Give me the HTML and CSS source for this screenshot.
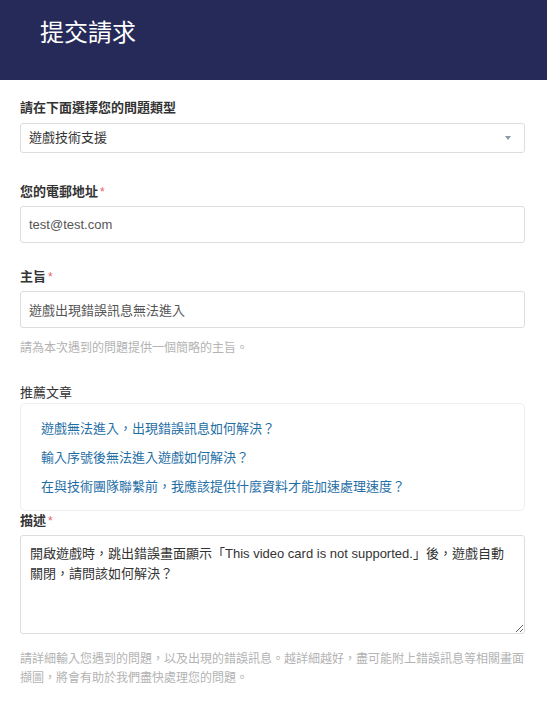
FILE: index.html
```html
<!DOCTYPE html>
<html lang="zh-Hant">
<head>
<meta charset="utf-8">
<title>提交請求</title>
<link rel="stylesheet" href="styles.css">
</head>
<body>
<header class="hero">
  <h1 class="hero-title">提交請求</h1>
</header>
<main class="form">
  <div class="field field-type">
    <label class="label">請在下面選擇您的問題類型</label>
    <div class="select">
      <span class="select-value">遊戲技術支援</span>
      <span class="select-arrow"></span>
    </div>
  </div>

  <div class="field field-email">
    <label class="label">您的電郵地址<span class="req">*</span></label>
    <input class="input" type="text" value="test@test.com">
  </div>

  <div class="field field-subject">
    <label class="label">主旨<span class="req">*</span></label>
    <input class="input" type="text" value="遊戲出現錯誤訊息無法進入">
    <p class="hint hint-subject">請為本次遇到的問題提供一個簡略的主旨。</p>
  </div>

  <div class="field field-articles">
    <div class="label-plain">推薦文章</div>
    <ul class="articles">
      <li><a class="article-link" href="#">遊戲無法進入，出現錯誤訊息如何解決？</a></li>
      <li><a class="article-link" href="#">輸入序號後無法進入遊戲如何解決？</a></li>
      <li><a class="article-link" href="#">在與技術團隊聯繫前，我應該提供什麼資料才能加速處理速度？</a></li>
    </ul>
  </div>

  <div class="field field-desc">
    <label class="label">描述<span class="req">*</span></label>
    <textarea class="textarea">開啟遊戲時，跳出錯誤畫面顯示「This video card is not supported.」後，遊戲自動關閉，請問該如何解決？</textarea>
    <p class="hint hint-desc">請詳細輸入您遇到的問題，以及出現的錯誤訊息。越詳細越好，盡可能附上錯誤訊息等相關畫面擷圖，將會有助於我們盡快處理您的問題。</p>
  </div>
</main>
</body>
</html>
```

FILE: styles.css
```css
* {
  box-sizing: border-box;
}

html, body {
  margin: 0;
  padding: 0;
  background: #ffffff;
}

body {
  font-family: "Liberation Sans", "Noto Sans CJK TC", sans-serif;
  font-size: 13px;
  line-height: 20px;
  color: #333333;
}

.hero {
  height: 80px;
  background: #262a58;
  padding: 18px 40px 0;
}

.hero-title {
  margin: 0;
  font-family: "Liberation Serif", "Noto Sans CJK TC", serif;
  font-weight: 400;
  font-size: 24px;
  line-height: 30px;
  color: #ffffff;
}

.form {
  width: 505px;
  margin: 0 0 0 20px;
  padding-top: 18px;
}

.field {
  display: flex;
  flex-direction: column;
}

.field-type {
  margin-bottom: 29px;
}

.field-email {
  margin-bottom: 24px;
}

.field-subject {
  margin-bottom: 25px;
}

.label {
  display: block;
  font-weight: 700;
  font-size: 13px;
  line-height: 20px;
  color: #333333;
  margin-bottom: 5px;
}

.field-email .label,
.field-subject .label,
.field-desc .label {
  margin-bottom: 4px;
}

.req {
  color: #e8606a;
  font-weight: 400;
  font-size: 12px;
  margin-left: 2px;
}

.label-plain {
  font-size: 13px;
  line-height: 20px;
  color: #333333;
}

.select {
  height: 30px;
  border: 1px solid #dddddd;
  border-radius: 3px;
  padding: 0 13px 0 8px;
  display: flex;
  align-items: center;
  justify-content: space-between;
}

.select-value {
  color: #333333;
  font-size: 13px;
  line-height: 20px;
}

.select-arrow {
  width: 0;
  height: 0;
  border-style: solid;
  border-width: 4px 3px 0 3px;
  border-color: #8c98ab transparent transparent transparent;
}

.input {
  display: block;
  width: 100%;
  height: 37px;
  border: 1px solid #dddddd;
  border-radius: 3px;
  padding: 0 8px;
  margin: 0;
  font-family: "Liberation Sans", "Noto Sans CJK TC", sans-serif;
  font-size: 13px;
  color: #555555;
  background: #ffffff;
  outline: none;
}

.hint {
  margin: 0;
  font-size: 12px;
  line-height: 20px;
  color: #b3b3b3;
}

.hint-subject {
  margin-top: 10px;
}

.hint-desc {
  margin-top: 16px;
  line-height: 19px;
}

.articles {
  list-style: none;
  margin: 0;
  padding: 15px 20px 13px;
  border: 1px solid #eeeeee;
  border-radius: 5px;
  display: flex;
  flex-direction: column;
  gap: 9px;
}

.articles li {
  line-height: 20px;
}

.article-link {
  color: #1f6ea6;
  text-decoration: none;
  font-size: 13px;
}

.textarea {
  display: block;
  width: 100%;
  height: 99px;
  margin: 0;
  border: 1px solid #dddddd;
  border-radius: 3px;
  padding: 8px 9px;
  font-family: "Liberation Sans", "Noto Sans CJK TC", sans-serif;
  font-size: 13px;
  line-height: 20px;
  color: #333333;
  background: #ffffff;
  resize: vertical;
  outline: none;
}
```
